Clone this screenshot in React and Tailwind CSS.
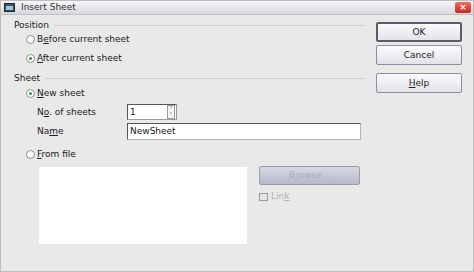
import React from "react";

const U = ({ children }) => <span className="underline underline-offset-1">{children}</span>;

function Radio({ checked }) {
  return (
    <span className="w-[9px] h-[9px] rounded-full border border-[#8a8a8a] bg-white flex items-center justify-center shrink-0">
      {checked && <span className="w-[3px] h-[3px] rounded-full bg-[#3d8a3d]" />}
    </span>
  );
}

function Btn({ children, def }) {
  return (
    <div
      className={
        "h-[20px] w-[86px] flex items-center justify-center rounded-[2px] bg-gradient-to-b from-[#fbfbfd] to-[#e2e3ea] text-[#222] " +
        (def ? "border-2 border-[#5c5c66]" : "border border-[#8d8f9e]")
      }
    >
      {children}
    </div>
  );
}

function Header({ children }) {
  return (
    <div className="h-[12px] flex items-center gap-[5px] pl-[13px]">
      <span>{children}</span>
      <span className="flex-1 h-px bg-[#cfcfcf]" />
    </div>
  );
}

export default function App() {
  return (
    <div
      className="w-[474px] h-[272px] bg-[#e9e9ea] text-[9px] leading-none text-[#202020] flex flex-col border border-[#bdbdbd]"
      style={{ fontFamily: '"DejaVu Sans", sans-serif' }}
    >
      {/* Title bar */}
      <div className="h-[14px] flex items-center bg-gradient-to-b from-[#f8f8fa] to-[#d6d7dc] border-b border-[#c0c0c6] shrink-0">
        <div className="ml-[3px] w-[11px] h-[9px] bg-[#3d4e5c] border border-[#1e2a33] flex items-end justify-center">
          <span className="w-[7px] h-[4px] bg-[#9fc3d8] mb-px" />
        </div>
        <span className="ml-[6px] text-[#303030]">Insert Sheet</span>
        <div className="ml-auto mr-[2px] w-[16px] h-[11px] rounded-[2px] bg-gradient-to-b from-[#f26a5a] to-[#c8261b] flex items-center justify-center text-white text-[9px] font-bold">
          ×
        </div>
      </div>

      <div className="flex flex-1">
        {/* Left */}
        <div className="w-[364px] flex flex-col pt-[4px]">
          <Header>Position</Header>
          <div className="h-[12px] mt-[2px] flex items-center gap-[2px] pl-[25px]">
            <Radio />
            <span>B<U>e</U>fore current sheet</span>
          </div>
          <div className="h-[12px] mt-[7px] flex items-center gap-[2px] pl-[25px]">
            <Radio checked />
            <span><U>A</U>fter current sheet</span>
          </div>
          <div className="mt-[8px]">
            <Header>Sheet</Header>
          </div>
          <div className="h-[12px] mt-[3px] flex items-center gap-[2px] pl-[25px]">
            <Radio checked />
            <span><U>N</U>ew sheet</span>
          </div>
          <div className="h-[16px] mt-[5px] flex items-center pl-[36px]">
            <span className="w-[90px]">N<U>o</U>. of sheets</span>
            <div className="w-[50px] h-[16px] bg-white border border-[#9a9a9a] border-t-[#555] border-l-[#555] flex items-center">
              <span className="pl-[2px] flex-1">1</span>
              <div className="w-[8px] h-[14px] mr-px border border-[#9a9a9a] flex flex-col items-center justify-between text-[6px] text-[#555] leading-[6px] bg-[#f4f4f4]">
                <span>˄</span>
                <span>˅</span>
              </div>
            </div>
          </div>
          <div className="h-[17px] mt-[3px] flex items-center pl-[36px]">
            <span className="w-[90px]">Na<U>m</U>e</span>
            <div className="w-[234px] h-[17px] bg-white border border-[#b5b5b5] border-t-[#555] border-l-[#555] flex items-center pl-[2px]">
              NewSheet
            </div>
          </div>
          <div className="h-[12px] mt-[8px] flex items-center gap-[2px] pl-[25px]">
            <Radio />
            <span><U>F</U>rom file</span>
          </div>
          <div className="flex mt-[7px] pl-[38px]">
            <div className="w-[208px] h-[77px] bg-white" />
            <div className="ml-[12px] flex flex-col -mt-[1px]">
              <div className="w-[101px] h-[19px] rounded-[2px] border border-[#9a9cae] bg-gradient-to-b from-[#d6d8e4] to-[#b7b9cb] flex items-center justify-center text-[#a9abba]">
                B<U>r</U>owse...
              </div>
              <div className="flex items-center gap-[3px] mt-[7px] text-[#b0b0b0]">
                <span className="w-[9px] h-[8px] border border-[#9a9a9a] bg-[#e4e4e4]" />
                <span>Lin<U>k</U></span>
              </div>
            </div>
          </div>
        </div>

        {/* Right buttons */}
        <div className="flex flex-col pl-[11px] pt-[7px]">
          <Btn def>OK</Btn>
          <div className="mt-[3px]"><Btn>Cancel</Btn></div>
          <div className="mt-[8px]"><Btn><span><U>H</U>elp</span></Btn></div>
        </div>
      </div>
    </div>
  );
}
